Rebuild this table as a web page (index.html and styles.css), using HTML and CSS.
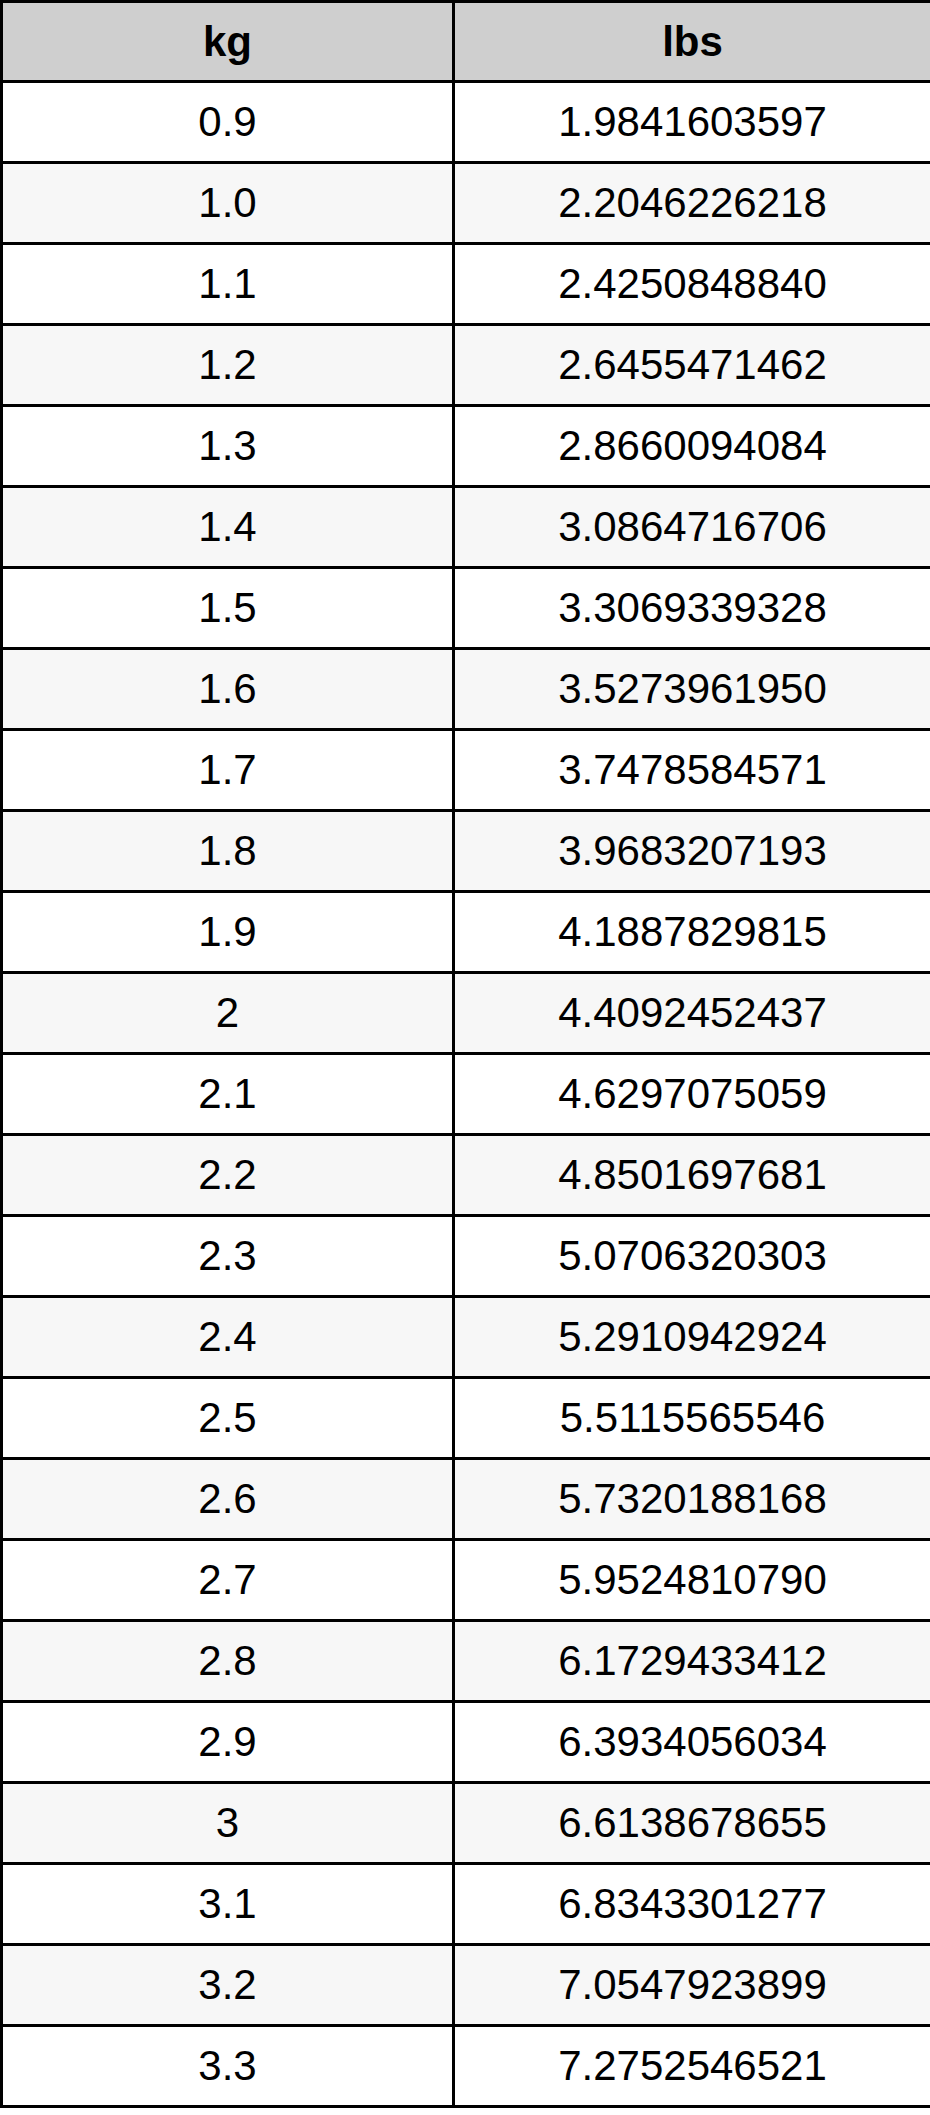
FILE: index.html
```html
<!DOCTYPE html>
<html>
<head>
<meta charset="utf-8">
<link rel="stylesheet" href="styles.css">
</head>
<body>
<table class="conv">
<colgroup><col class="c1"><col class="c2"></colgroup>
<thead>
<tr><th>kg</th><th>lbs</th></tr>
</thead>
<tbody>
<tr><td>0.9</td><td>1.9841603597</td></tr>
<tr><td>1.0</td><td>2.2046226218</td></tr>
<tr><td>1.1</td><td>2.4250848840</td></tr>
<tr><td>1.2</td><td>2.6455471462</td></tr>
<tr><td>1.3</td><td>2.8660094084</td></tr>
<tr><td>1.4</td><td>3.0864716706</td></tr>
<tr><td>1.5</td><td>3.3069339328</td></tr>
<tr><td>1.6</td><td>3.5273961950</td></tr>
<tr><td>1.7</td><td>3.7478584571</td></tr>
<tr><td>1.8</td><td>3.9683207193</td></tr>
<tr><td>1.9</td><td>4.1887829815</td></tr>
<tr><td>2</td><td>4.4092452437</td></tr>
<tr><td>2.1</td><td>4.6297075059</td></tr>
<tr><td>2.2</td><td>4.8501697681</td></tr>
<tr><td>2.3</td><td>5.0706320303</td></tr>
<tr><td>2.4</td><td>5.2910942924</td></tr>
<tr><td>2.5</td><td>5.5115565546</td></tr>
<tr><td>2.6</td><td>5.7320188168</td></tr>
<tr><td>2.7</td><td>5.9524810790</td></tr>
<tr><td>2.8</td><td>6.1729433412</td></tr>
<tr><td>2.9</td><td>6.3934056034</td></tr>
<tr><td>3</td><td>6.6138678655</td></tr>
<tr><td>3.1</td><td>6.8343301277</td></tr>
<tr><td>3.2</td><td>7.0547923899</td></tr>
<tr><td>3.3</td><td>7.2752546521</td></tr>
</tbody>
</table>
</body>
</html>
```
FILE: styles.css
```css
html, body {
  margin: 0;
  padding: 0;
  background: #fff;
}

.conv {
  width: 930px;
  border-collapse: collapse;
  table-layout: fixed;
  border: 3px solid #000;
  font-family: "Liberation Sans", Arial, sans-serif;
  font-size: 42px;
  color: #000;
}

.c1 { width: 452px; }
.c2 { width: 478px; }

.conv th,
.conv td {
  border: 3px solid #000;
  padding: 0;
  text-align: center;
  vertical-align: middle;
  line-height: 1;
}

.conv th {
  background: #cfcfcf;
  font-weight: bold;
  height: 77px;
}

.conv td {
  height: 78px;
  background: #fff;
}

.conv tbody tr:nth-child(even) td {
  background: #f7f7f7;
}
```
